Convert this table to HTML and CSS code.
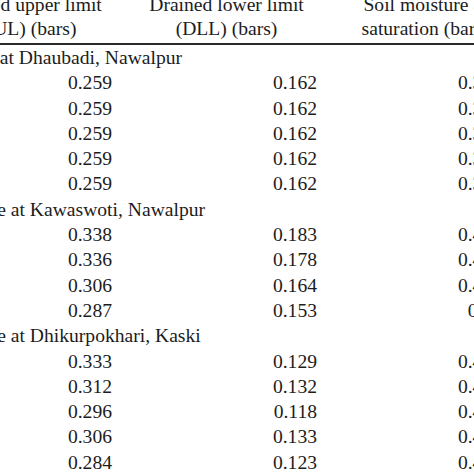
FILE: index.html
```html
<!DOCTYPE html>
<html>
<head>
<meta charset="utf-8">
<link rel="stylesheet" href="styles.css">
</head>
<body>
<table class="data">
  <colgroup>
    <col class="c1">
    <col class="c2">
    <col class="c3">
  </colgroup>
  <thead>
    <tr>
      <th>Drained upper limit<br>(DUL) (bars)</th>
      <th>Drained lower limit<br>(DLL) (bars)</th>
      <th>Soil moisture at<br>saturation (bars)</th>
    </tr>
  </thead>
  <tbody>
    <tr class="group"><td colspan="3"><span class="g1">Wheat field at Dhaubadi, Nawalpur</span></td></tr>
    <tr><td>0.259</td><td>0.162</td><td>0.398</td></tr>
    <tr><td>0.259</td><td>0.162</td><td>0.398</td></tr>
    <tr><td>0.259</td><td>0.162</td><td>0.398</td></tr>
    <tr><td>0.259</td><td>0.162</td><td>0.398</td></tr>
    <tr><td>0.259</td><td>0.162</td><td>0.398</td></tr>
    <tr class="group"><td colspan="3"><span class="g2">Research site at Kawaswoti, Nawalpur</span></td></tr>
    <tr><td>0.338</td><td>0.183</td><td>0.452</td></tr>
    <tr><td>0.336</td><td>0.178</td><td>0.448</td></tr>
    <tr><td>0.306</td><td>0.164</td><td>0.431</td></tr>
    <tr><td>0.287</td><td>0.153</td><td>0.41</td></tr>
    <tr class="group"><td colspan="3"><span class="g2">Research site at Dhikurpokhari, Kaski</span></td></tr>
    <tr><td>0.333</td><td>0.129</td><td>0.446</td></tr>
    <tr><td>0.312</td><td>0.132</td><td>0.441</td></tr>
    <tr><td>0.296</td><td>0.118</td><td>0.437</td></tr>
    <tr><td>0.306</td><td>0.133</td><td>0.443</td></tr>
    <tr><td>0.284</td><td>0.123</td><td>0.435</td></tr>
  </tbody>
</table>
</body>
</html>
```
FILE: styles.css
```css
html, body {
  margin: 0;
  padding: 0;
  overflow: hidden;
  background: #ffffff;
}

body {
  width: 474px;
  height: 474px;
  font-family: "Liberation Serif", "Times New Roman", serif;
  font-size: 19.6px;
  color: #1c1c1c;
}

.data {
  border-collapse: collapse;
  table-layout: fixed;
  width: 597px;
  margin-left: -75px;
  margin-top: -7px;
}

.c1 { width: 199px; }
.c2 { width: 205px; }
.c3 { width: 193px; }

.data th {
  font-weight: normal;
  text-align: center;
  line-height: 24px;
  padding: 0 0 2px 0;
  border-bottom: 2px solid #2a2a2a;
  white-space: nowrap;
}

.data td {
  padding: 0 12px 0 0;
  line-height: 25.3px;
  text-align: right;
  white-space: nowrap;
}

.data td:nth-child(3) {
  padding-right: 20px;
}

.data .group td {
  text-align: left;
  padding: 0;
}

.g1 {
  margin-left: -22px;
}

.g2 {
  margin-left: -23px;
}
```
